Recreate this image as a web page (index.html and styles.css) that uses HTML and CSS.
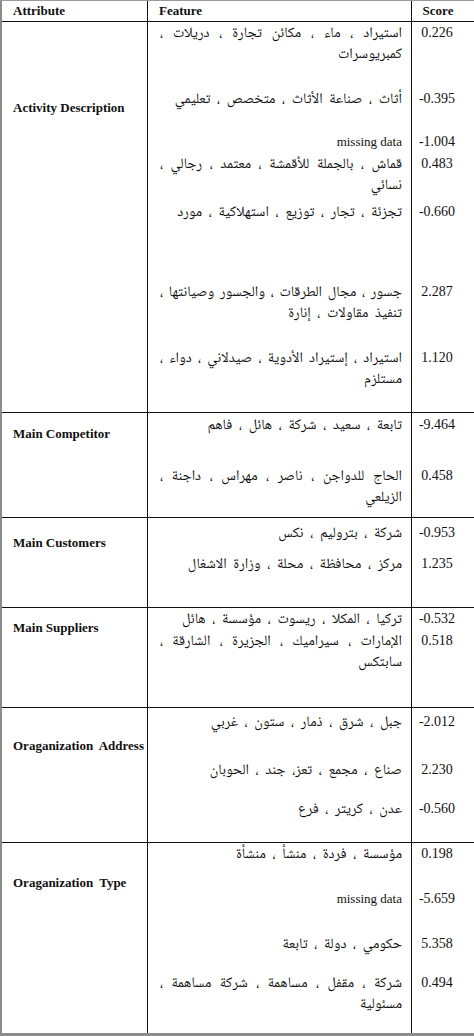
FILE: index.html
```html
<!DOCTYPE html>
<html lang="en">
<head>
<meta charset="utf-8">
<title>Attribute feature scores</title>
<link rel="stylesheet" href="styles.css">
</head>
<body>
<div class="tbl">
  <div class="head">
    <div class="attr">Attribute</div>
    <div class="feat">Feature</div>
    <div class="score">Score</div>
  </div>

  <div class="sec s-act">
    <div class="attr">Activity Description</div>
    <div class="body">
      <div class="e p0"><div class="feat"><span class="ln j">استيراد ، ماء ، مكائن تجارة ، دريلات ،</span><span class="ln">كمبريوسرات</span></div><div class="score">0.226</div></div>
      <div class="e p24"><div class="feat"><span class="ln">أثاث ، صناعة الأثاث ، متخصص ، تعليمي</span></div><div class="score">-0.395</div></div>
      <div class="e p22"><div class="feat"><span class="ln lat">missing data</span></div><div class="score">-1.004</div></div>
      <div class="e p1"><div class="feat"><span class="ln j">قماش ، بالجملة للأقمشة ، معتمد ، رجالي ،</span><span class="ln">نسائي</span></div><div class="score">0.483</div></div>
      <div class="e p6"><div class="feat"><span class="ln">تجزئة ، تجار ، توزيع ، استهلاكية ، مورد</span></div><div class="score">-0.660</div></div>
      <div class="e p59"><div class="feat"><span class="ln j">جسور ، مجال الطرقات ، والجسور وصيانتها ،</span><span class="ln">تنفيذ مقاولات ، إنارة</span></div><div class="score">2.287</div></div>
      <div class="e p24"><div class="feat"><span class="ln j">استيراد ، إستيراد الأدوية ، صيدلاني ، دواء ،</span><span class="ln">مستلزم</span></div><div class="score">1.120</div></div>
    </div>
  </div>

  <div class="sec s-comp">
    <div class="attr">Main Competitor</div>
    <div class="body">
      <div class="e p1"><div class="feat"><span class="ln">تابعة ، سعيد ، شركة ، هائل ، فاهم</span></div><div class="score">-9.464</div></div>
      <div class="e p30"><div class="feat"><span class="ln j">الحاج للدواجن ، ناصر ، مهراس ، داجنة ،</span><span class="ln">الزيلعي</span></div><div class="score">0.458</div></div>
    </div>
  </div>

  <div class="sec s-cust">
    <div class="attr">Main Customers</div>
    <div class="body">
      <div class="e p4"><div class="feat"><span class="ln">شركة ، بتروليم ، نكس</span></div><div class="score">-0.953</div></div>
      <div class="e p10"><div class="feat"><span class="ln">مركز ، محافظة ، محلة ، وزارة الاشغال</span></div><div class="score">1.235</div></div>
    </div>
  </div>

  <div class="sec s-supp">
    <div class="attr">Main Suppliers</div>
    <div class="body">
      <div class="e p0"><div class="feat"><span class="ln">تركيا ، المكلا ، ريسوت ، مؤسسة ، هائل</span></div><div class="score">-0.532</div></div>
      <div class="e p1"><div class="feat"><span class="ln j">الإمارات ، سيراميك ، الجزيرة ، الشارقة ،</span><span class="ln">سابتكس</span></div><div class="score">0.518</div></div>
    </div>
  </div>

  <div class="sec s-addr">
    <div class="attr">Oraganization Address</div>
    <div class="body">
      <div class="e p3"><div class="feat"><span class="ln">جبل ، شرق ، ذمار ، ستون ، غربي</span></div><div class="score">-2.012</div></div>
      <div class="e p27"><div class="feat"><span class="ln">صناع ، مجمع ، تعز، جند ، الحوبان</span></div><div class="score">2.230</div></div>
      <div class="e p18"><div class="feat"><span class="ln">عدن ، كريتر ، فرع</span></div><div class="score">-0.560</div></div>
    </div>
  </div>

  <div class="sec s-type">
    <div class="attr">Oraganization Type</div>
    <div class="body">
      <div class="e p0"><div class="feat"><span class="ln">مؤسسة ، فردة ، منشأ ، منشأة</span></div><div class="score">0.198</div></div>
      <div class="e p24"><div class="feat"><span class="ln lat">missing data</span></div><div class="score">-5.659</div></div>
      <div class="e p24"><div class="feat"><span class="ln">حكومي ، دولة ، تابعة</span></div><div class="score">5.358</div></div>
      <div class="e p18"><div class="feat"><span class="ln j">شركة ، مقفل ، مساهمة ، شركة مساهمة ،</span><span class="ln">مسئولية</span></div><div class="score">0.494</div></div>
    </div>
  </div>
</div>
</body>
</html>
```

FILE: styles.css
```css
html, body {
  margin: 0;
  padding: 0;
  background: #fff;
}

.tbl {
  width: 474px;
  box-sizing: border-box;
  border-left: 2px solid #8c8c8c;
  border-top: 1px solid #9a9a9a;
  border-bottom: 3px solid #8c8c8c;
  color: #111;
  font-family: "Liberation Serif", "Times New Roman", Tinos, "Noto Naskh Arabic", Amiri, "Noto Sans Arabic", "DejaVu Sans", serif;
  font-size: 13px;
  background:
    linear-gradient(#111, #111) no-repeat 145px 0 / 1px 100%,
    linear-gradient(#111, #111) no-repeat 409px 0 / 1px 100%,
    #fff;
}

.head {
  display: flex;
  height: 20px;
  line-height: 20px;
  font-weight: bold;
  border-bottom: 1px solid #111;
}

.head .attr {
  width: 146px;
  box-sizing: border-box;
  padding-left: 11px;
}

.head .feat {
  width: 264px;
  box-sizing: border-box;
  padding-left: 11px;
}

.head .score {
  flex: 1;
  text-align: center;
  padding-right: 10px;
}

.sec {
  display: flex;
  border-top: 1px solid #111;
}

.head + .sec {
  border-top: none;
}

.sec .attr {
  width: 146px;
  flex: none;
  box-sizing: border-box;
  padding-left: 11px;
  font-weight: bold;
  line-height: 21px;
  white-space: nowrap;
}

.s-act .attr { padding-top: 75px; }
.s-comp .attr { padding-top: 10px; }
.s-cust .attr { padding-top: 14px; }
.s-supp .attr { padding-top: 9px; }
.s-addr .attr { padding-top: 27px; word-spacing: 3px; }
.s-type .attr { padding-top: 29px; word-spacing: 3px; }

.body {
  flex: 1;
  display: flex;
  flex-direction: column;
}

.s-act .body { padding-bottom: 23px; }
.s-comp .body { padding-bottom: 10px; }
.s-cust .body { padding-bottom: 33px; }
.s-supp .body { padding-bottom: 35px; }
.s-addr .body { padding-bottom: 23px; }
.s-type .body { padding-bottom: 19px; }

.e {
  display: flex;
  line-height: 21px;
}

.p0 { padding-top: 0; }
.p1 { padding-top: 1px; }
.p3 { padding-top: 3px; }
.p4 { padding-top: 4px; }
.p6 { padding-top: 6px; }
.p10 { padding-top: 10px; }
.p18 { padding-top: 18px; }
.p22 { padding-top: 22px; }
.p24 { padding-top: 24px; }
.p27 { padding-top: 27px; }
.p30 { padding-top: 30px; }
.p59 { padding-top: 59px; }

.e .feat {
  width: 264px;
  flex: none;
  box-sizing: border-box;
  padding: 0 10px 0 12px;
  direction: rtl;
  text-align: right;
  font-size: 14.5px;
}

.ln {
  display: block;
  white-space: nowrap;
  word-spacing: 3px;
}

.ln.j {
  text-align: justify;
  text-align-last: justify;
  white-space: normal;
  word-spacing: 0;
}

.ln.lat {
  font-size: 13px;
  word-spacing: 0;
}

.e .score {
  flex: 1;
  text-align: center;
  padding-right: 12px;
  font-size: 14px;
}
```
